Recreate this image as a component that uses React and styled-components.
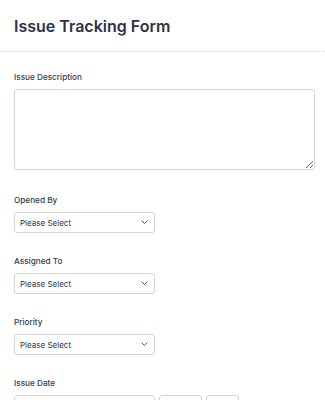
import styled, { createGlobalStyle } from "styled-components";

const GlobalStyle = createGlobalStyle`
  body {
    margin: 0;
    background: #fff;
    font-family: Inter, "Noto Sans", sans-serif;
    color: #2c3345;
    overflow: hidden;
  }
  * { box-sizing: border-box; }
`;

const Header = styled.div`
  padding: 16px 14px 0;
  height: 52px;
  border-bottom: 1px dotted #d6d9e0;
`;

const Title = styled.h1`
  margin: 0;
  font-size: 16px;
  line-height: 20px;
  font-weight: 600;
  color: #2c3345;
`;

const Form = styled.form`
  display: flex;
  flex-direction: column;
  gap: 22px;
  padding: 19px 14px 0;
`;

const Field = styled.div`
  display: flex;
  flex-direction: column;
  gap: 6px;
`;

const Label = styled.label`
  font-size: 8.2px;
  line-height: 12px;
  font-weight: 500;
  color: #363c4e;
`;

const TextArea = styled.textarea`
  width: 301px;
  height: 81px;
  margin-bottom: 2px;
  border: 1px solid #d0d4de;
  border-radius: 3px;
  resize: vertical;
  font-family: inherit;
  outline: none;
`;

const SelectBox = styled.div`
  width: ${(p) => p.$w || 141}px;
  height: 21px;
  border: 1px solid #d0d4de;
  border-radius: 3px;
  display: flex;
  align-items: center;
  justify-content: space-between;
  padding: 0 6px 0 5px;
  font-size: 8px;
  color: #2c3345;
  background: #fff;
`;

const Row = styled.div`
  display: flex;
  gap: 4px;
`;

const Chevron = () => (
  <svg width="7" height="5" viewBox="0 0 7 5" fill="none">
    <path d="M1 1l2.5 2.5L6 1" stroke="#4a5164" strokeWidth="1" strokeLinecap="round" strokeLinejoin="round" />
  </svg>
);

const Select = ({ text }) => (
  <SelectBox>
    <span>{text}</span>
    <Chevron />
  </SelectBox>
);

const App = () => {
  return (
    <>
      <GlobalStyle />
      <Header>
        <Title>Issue Tracking Form</Title>
      </Header>
      <Form>
        <Field>
          <Label>Issue Description</Label>
          <TextArea />
        </Field>
        <Field>
          <Label>Opened By</Label>
          <Select text="Please Select" />
        </Field>
        <Field>
          <Label>Assigned To</Label>
          <Select text="Please Select" />
        </Field>
        <Field>
          <Label>Priority</Label>
          <Select text="Please Select" />
        </Field>
        <Field>
          <Label>Issue Date</Label>
          <Row>
            <SelectBox $w={141} />
            <SelectBox $w={43} />
            <SelectBox $w={33} />
          </Row>
        </Field>
      </Form>
    </>
  );
};

export default App;
